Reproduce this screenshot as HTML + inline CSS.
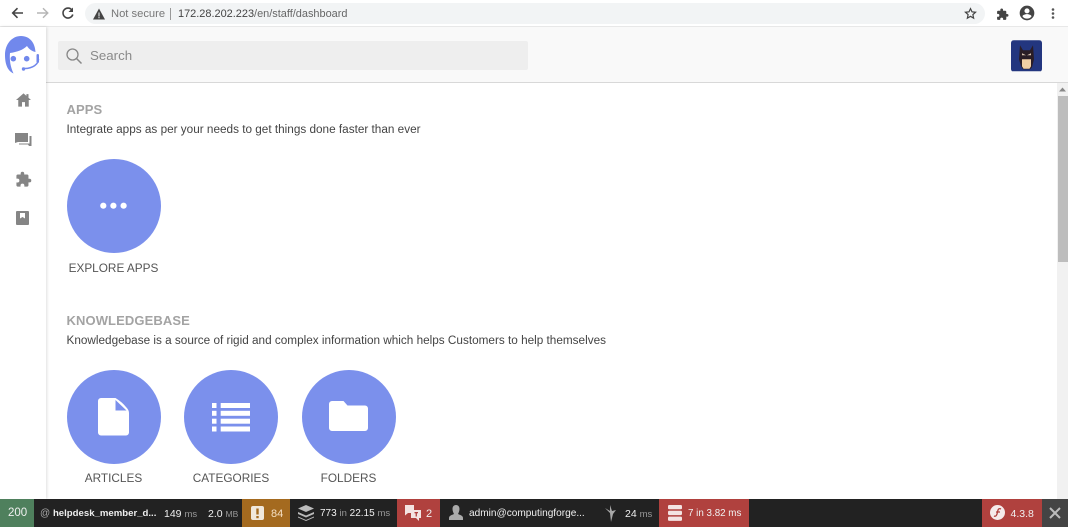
<!DOCTYPE html>
<html><head><meta charset="utf-8"><style>
*{box-sizing:border-box}
html,body{margin:0;padding:0;width:1068px;height:527px;overflow:hidden;background:#fff;font-family:"Liberation Sans",sans-serif}
#w{position:absolute;left:0;top:0;width:1068px;height:527px;overflow:hidden;filter:blur(.35px)}
.a{position:absolute}
.t{position:absolute;white-space:nowrap}
svg{position:absolute;display:block}
.c{position:absolute;width:94px;height:94px;border-radius:50%;background:#7b90ec}
.h{font-weight:700;font-size:13px;color:#a3a3a3;letter-spacing:.1px}
.p{font-size:11.75px;color:#444}
.l{font-size:11.8px;color:#555;text-align:center;width:140px}
.b{font-size:10px;color:#f0f0f0;top:508px}
.g{color:#999;font-size:9.5px}
</style></head><body><div id="w">
<!-- chrome -->
<div class="a" style="left:0;top:0;width:1068px;height:27px;background:#fff;border-bottom:1px solid #e8e8e8"></div>
<svg style="left:9px;top:5px" width="16" height="16" viewBox="0 0 16 16"><path d="M14 8H4M8.500 3.200L3.700 8l4.800 4.800" fill="none" stroke="#444" stroke-width="1.600"/></svg>
<svg style="left:35px;top:5px" width="16" height="16" viewBox="0 0 16 16"><path d="M2 8h10.500M8 3.200L12.800 8 8 12.800" fill="none" stroke="#b5b5b5" stroke-width="1.400"/></svg>
<svg style="left:60px;top:5px" width="16" height="16" viewBox="0 0 16 16"><path d="M12 5A5 5 0 1 0 12.800 9.500" fill="none" stroke="#444" stroke-width="1.600"/><path d="M13 2.500v4.500H8.500z" fill="#444"/></svg>
<div class="a" style="left:85px;top:3px;width:900px;height:21px;border-radius:11px;background:#f2f4f5"></div>
<svg style="left:92px;top:7px" width="14" height="14" viewBox="0 0 14 14"><path d="M7 1.500L13 12.500H1z" fill="#444"/><path d="M6.500 5.500h1v4h-1zM6.500 10h1v1.200h-1z" fill="#f1f3f4"/></svg>
<div class="t" style="left:111px;top:8px;font-size:11.200px;color:#777">Not secure</div>
<div class="a" style="left:170px;top:8px;width:1px;height:12px;background:#999"></div>
<div class="t" style="left:178px;top:8px;font-size:10.950px;color:#666"><span style="color:#444">172.28.202.223</span>/en/staff/dashboard</div>
<svg style="left:964px;top:7px" width="13" height="13" viewBox="0 0 24 24"><path d="M12 3l2.800 6 6.500.7-4.900 4.400 1.400 6.500L12 17.200l-5.800 3.400 1.400-6.500L2.700 9.700 9.200 9z" fill="none" stroke="#444" stroke-width="2.200"/></svg>
<svg style="left:996px;top:7.500px" width="13" height="13" viewBox="0 0 24 24"><path d="M20.500 11H19V7a2 2 0 0 0-2-2h-4V3.500a2.500 2.500 0 0 0-5 0V5H4a2 2 0 0 0-2 2v3.800h1.500a2.700 2.700 0 0 1 0 5.400H2V20a2 2 0 0 0 2 2h3.800v-1.500a2.700 2.700 0 0 1 5.400 0V22H17a2 2 0 0 0 2-2v-4h1.500a2.500 2.500 0 0 0 0-5z" fill="#444"/></svg>
<svg style="left:1019px;top:5px" width="16" height="16" viewBox="0 0 24 24"><path d="M12 1a11 11 0 1 0 0 22 11 11 0 0 0 0-22zm0 4a3.800 3.800 0 1 1 0 7.600A3.800 3.800 0 0 1 12 5zm0 15.500a8.500 8.500 0 0 1-6.800-3.500c.1-2.200 4.500-3.400 6.800-3.400s6.700 1.200 6.800 3.400a8.500 8.500 0 0 1-6.800 3.500z" fill="#444"/></svg>
<svg style="left:1051px;top:7.500px" width="4" height="12" viewBox="0 0 4 12"><circle cx="2" cy="1.500" r="1.300" fill="#555"/><circle cx="2" cy="5.500" r="1.300" fill="#555"/><circle cx="2" cy="9.500" r="1.300" fill="#555"/></svg>

<!-- header -->
<div class="a" style="left:46px;top:27px;width:1022px;height:56px;background:#f9f9f9;border-bottom:1px solid #d8d8d8"></div>
<div class="a" style="left:58px;top:41px;width:470px;height:29px;background:#eee;border-radius:2px"></div>
<svg style="left:65px;top:47px" width="18" height="18" viewBox="0 0 18 18"><circle cx="7.500" cy="7.500" r="5.500" fill="none" stroke="#888" stroke-width="1.300"/><path d="M11.500 11.500l5 5" stroke="#888" stroke-width="1.500"/></svg>
<div class="t" style="left:90px;top:48px;font-size:13.300px;color:#8a8a8a">Search</div>
<!-- avatar -->
<svg style="left:1011px;top:40px;border-radius:3px" width="31" height="31.500" viewBox="0 0 31 31"><rect width="31" height="31" fill="#23367f"/><path d="M9 5l3 5h7l3-5 1 14-2 8-2 2h-7l-2-3-2-7z" fill="#2a1d26"/><path d="M11 19h9v7l-1.500 2.500h-6L11 26z" fill="#f1cfa4"/><path d="M11 13l4 2-4 0zM20 13l-4 2 4 0z" fill="#d8c4b0"/></svg>

<!-- sidebar -->
<div class="a" style="left:0;top:27px;width:46px;height:472px;background:#fff;box-shadow:1px 0 3px rgba(0,0,0,.13)"></div>
<svg style="left:4px;top:35px" width="38" height="40" viewBox="0 0 38 40">
<path d="M9.500 38.500C3 35.500 1 28 1 20 1 9 8 1 17 1c9 0 14 7 14.500 16-4-1-6.500-3-8.500-6-4 4-10 6-17 7-.7 7 .5 14 3.500 20.500z" fill="#7188ec"/>
<circle cx="9.300" cy="23.700" r="2.800" fill="#7188ec"/><circle cx="22.700" cy="23.700" r="2.800" fill="#7188ec"/>
<path d="M34.500 24c0 5-5.500 9.500-14 9.500" fill="none" stroke="#7188ec" stroke-width="1.500"/><rect x="32.500" y="19" width="2.500" height="9" rx="1.200" fill="#7188ec"/><circle cx="19.500" cy="34" r="1.700" fill="#7188ec"/></svg>
<svg style="left:16px;top:93px" width="15" height="14" viewBox="0 0 18 16"><path d="M9 0L0 8h2.700v8h4.500v-5.500h3.600V16h4.500V8H18l-3-2.700V1h-2.500v2z" fill="#858585"/></svg>
<svg style="left:15px;top:133px" width="17" height="13" viewBox="0 0 17 13"><path d="M0 0h13v9H3L0 10z" fill="#858585"/><path d="M14.500 3h2v10H14l-1-1.500H4V10.500h10.500z" fill="#858585"/></svg>
<svg style="left:15px;top:171px" width="17" height="17" viewBox="0 0 24 24"><path d="M20.500 11H19V7a2 2 0 0 0-2-2h-4V3.500a2.500 2.500 0 0 0-5 0V5H4a2 2 0 0 0-2 2v3.800h1.500a2.700 2.700 0 0 1 0 5.400H2V20a2 2 0 0 0 2 2h3.800v-1.500a2.700 2.700 0 0 1 5.400 0V22H17a2 2 0 0 0 2-2v-4h1.500a2.500 2.500 0 0 0 0-5z" fill="#858585"/></svg>
<svg style="left:16px;top:211px" width="13" height="14" viewBox="0 0 13 14"><path d="M1 0h11a1 1 0 0 1 1 1v12a1 1 0 0 1-1 1H1a1 1 0 0 1-1-1V1a1 1 0 0 1 1-1z" fill="#858585"/><path d="M4 2h5v5.500L6.500 6 4 7.500z" fill="#fff"/></svg>

<!-- content -->
<div class="t h" style="left:66.500px;top:102px">APPS</div>
<div class="t p" style="left:66.500px;top:122.500px">Integrate apps as per your needs to get things done faster than ever</div>
<div class="c" style="left:66.500px;top:159px"></div>
<svg style="left:99px;top:200px" width="30" height="12" viewBox="0 0 30 12"><circle cx="4.300" cy="5.700" r="3.100" fill="#fff"/><circle cx="14.400" cy="5.700" r="3.100" fill="#fff"/><circle cx="24.600" cy="5.700" r="3.100" fill="#fff"/></svg>
<div class="t l" style="left:43.500px;top:261px">EXPLORE APPS</div>

<div class="t h" style="left:66.500px;top:313px">KNOWLEDGEBASE</div>
<div class="t p" style="left:66.500px;top:333.500px">Knowledgebase is a source of rigid and complex information which helps Customers to help themselves</div>
<div class="c" style="left:66.500px;top:369.500px"></div>
<div class="c" style="left:184px;top:369.500px"></div>
<div class="c" style="left:301.700px;top:369.500px"></div>
<svg style="left:98px;top:398px" width="31" height="38" viewBox="0 0 31 38"><path d="M3 0h14.500Q24 4 28 9q3 3 3 6v19.500a3 3 0 0 1-3 3H3a3 3 0 0 1-3-3V3a3 3 0 0 1 3-3z" fill="#fff"/><path d="M17.500 2L28.500 12.500H17.500z" fill="#7b90ec"/></svg>
<svg style="left:212px;top:402.500px" width="38" height="29" viewBox="0 0 38 29"><g fill="#fff"><rect width="4.500" height="5"/><rect x="8.700" width="29.300" height="5"/><rect y="7.800" width="4.500" height="5"/><rect x="8.700" y="7.800" width="29.300" height="5"/><rect y="15.700" width="4.500" height="5"/><rect x="8.700" y="15.700" width="29.300" height="5"/><rect y="23.500" width="4.500" height="5"/><rect x="8.700" y="23.500" width="29.300" height="5"/></g></svg>
<svg style="left:329px;top:401px" width="39" height="30" viewBox="0 0 39 30"><path d="M3 0h11.500l4 4.500H36a3 3 0 0 1 3 3V27a3 3 0 0 1-3 3H3a3 3 0 0 1-3-3V3a3 3 0 0 1 3-3z" fill="#fff"/></svg>
<div class="t l" style="left:43.500px;top:471px">ARTICLES</div>
<div class="t l" style="left:161px;top:471px">CATEGORIES</div>
<div class="t l" style="left:278.500px;top:471px">FOLDERS</div>

<!-- scrollbar -->
<div class="a" style="left:1057px;top:83px;width:11px;height:416px;background:#f1f1f1"></div>
<div class="a" style="left:1058px;top:96px;width:10px;height:166px;background:#bdbdbd"></div>
<svg style="left:1059px;top:87px" width="7" height="5" viewBox="0 0 7 5"><path d="M3.500 0.500L7 4.500H0z" fill="#888"/></svg>

<!-- debug bar -->
<div class="a" style="left:0;top:499px;width:1068px;height:28px;background:#222"></div>
<div class="a" style="left:0;top:499px;width:34px;height:28px;background:#4f805d"></div>
<div class="t b" style="left:8px;font-size:11.500px;top:507px">200</div>
<div class="t b" style="left:40px;color:#aaa">@ <b style="color:#eee;font-weight:700;font-size:9.600px">helpdesk_member_d...</b></div>
<div class="t b" style="left:164px;font-size:10.500px;top:507.500px">149 <span class="g">ms</span></div>
<div class="t b" style="left:208px;font-size:10.500px;top:507.500px">2.0 <span class="g" style="font-size:8.500px">MB</span></div>
<div class="a" style="left:242px;top:499px;width:48px;height:28px;background:#a46a1f"></div>
<svg style="left:251px;top:506px" width="13" height="14" viewBox="0 0 13 14"><rect width="13" height="14" rx="2" fill="#f0e8dc"/><rect x="5.300" y="2.500" width="2.400" height="6" fill="#a46a1f"/><rect x="5.300" y="10" width="2.400" height="2.200" fill="#a46a1f"/></svg>
<div class="t b" style="left:271px;font-size:11px;top:507.500px;color:#f5dfc2">84</div>
<svg style="left:298px;top:505px" width="16" height="16" viewBox="0 0 16 16"><path d="M8 0l8 3.500L8 7 0 3.500z" fill="#bbb"/><path d="M0 7l8 3.500L16 7v2l-8 3.500L0 9z" fill="#bbb"/><path d="M0 11.500L8 15l8-3.500v1L8 16 0 12.500z" fill="#bbb"/></svg>
<div class="t b" style="left:320px;font-size:10px">773 <span class="g">in</span> 22.15 <span class="g">ms</span></div>
<div class="a" style="left:397px;top:499px;width:43px;height:28px;background:#b0413e"></div>
<svg style="left:404px;top:505px" width="18" height="16" viewBox="0 0 18 16"><path d="M1 0h9v8H4l-3 2.500z" fill="#f3e3e2"/><path d="M7 5h10v8h-2v3l-3-3H7z" fill="#f3e3e2"/><rect x="10.500" y="7" width="3.500" height="1.300" fill="#b0413e"/><rect x="11.600" y="7" width="1.300" height="4.500" fill="#b0413e"/></svg>
<div class="t b" style="left:426px;font-size:11px;top:507.500px">2</div>
<svg style="left:449px;top:505px" width="14" height="15" viewBox="0 0 14 15"><path d="M7 0c2.500 0 3.500 2 3.500 4S9.500 8 9 9c2 1 5 1.500 5 4v2H0v-2c0-2.500 3-3 5-4-.5-1-1.500-3-1.500-5S4.500 0 7 0z" fill="#aaa"/></svg>
<div class="t b" style="left:469px;font-size:10.100px">admin@computingforge...</div>
<svg style="left:605px;top:505px" width="12" height="17" viewBox="0 0 12 17"><path d="M6 17L5 8 0 3l5 3L5 0l2 6 4-1-3 4z" fill="#aaa"/></svg>
<div class="t b" style="left:625px;font-size:10.500px;top:507.500px">24 <span class="g">ms</span></div>
<div class="a" style="left:659px;top:499px;width:90px;height:28px;background:#b0413e"></div>
<svg style="left:668px;top:505px" width="14" height="16" viewBox="0 0 14 16"><g fill="#f3e3e2"><rect width="14" height="4.300" rx="1.200"/><rect y="5.800" width="14" height="4.300" rx="1.200"/><rect y="11.600" width="14" height="4.300" rx="1.200"/></g></svg>
<div class="t b" style="left:688px;font-size:9.800px">7 in 3.82 ms</div>
<div class="a" style="left:982px;top:499px;width:60px;height:28px;background:#b0413e"></div>
<svg style="left:990px;top:505px" width="15" height="15" viewBox="0 0 15 15"><circle cx="7.500" cy="7.500" r="7.500" fill="#f5eaea"/><path d="M4 11c2 1 3-1 3.500-4S9 3 11 4M6 7h4" fill="none" stroke="#b0413e" stroke-width="1.300"/></svg>
<div class="t b" style="left:1010.500px;font-size:10.500px;top:507.500px">4.3.8</div>
<div class="a" style="left:1042px;top:499px;width:26px;height:28px;background:#444"></div>
<svg style="left:1049px;top:507px" width="12" height="12" viewBox="0 0 12 12"><path d="M1 1l10 10M11 1L1 11" stroke="#bbb" stroke-width="2"/></svg>
</div></body></html>
